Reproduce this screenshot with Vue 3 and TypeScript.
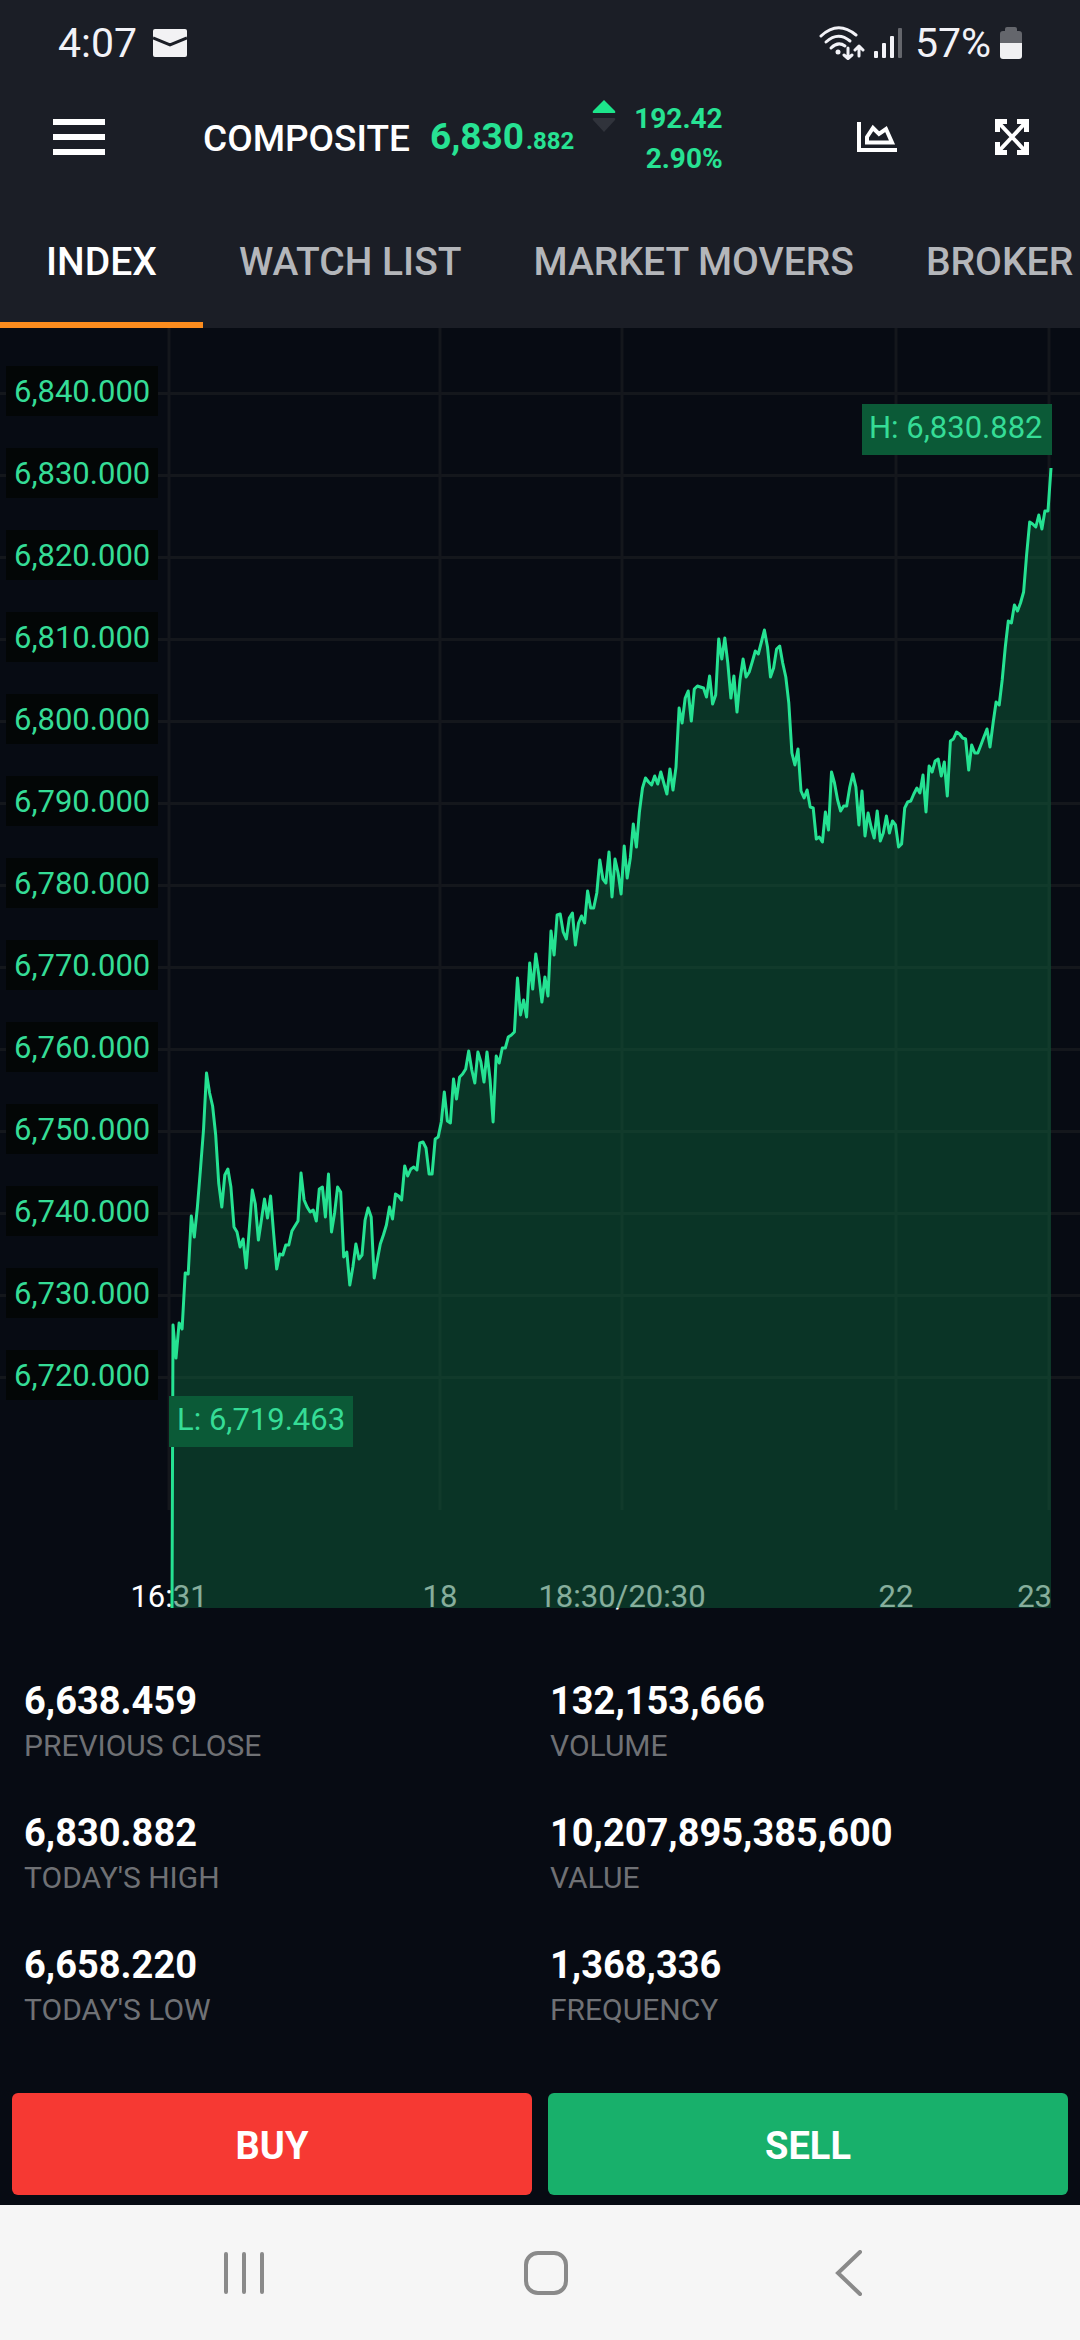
<script setup lang="ts">
import { ref } from 'vue'

interface Stat {
  label: string
  value: string
}

const tabs: string[] = ['INDEX', 'WATCH LIST', 'MARKET MOVERS', 'BROKER']
const activeTab = ref<string>('INDEX')

const stats: Stat[] = [
  { label: 'PREVIOUS CLOSE', value: '6,638.459' },
  { label: 'VOLUME', value: '132,153,666' },
  { label: "TODAY'S HIGH", value: '6,830.882' },
  { label: 'VALUE', value: '10,207,895,385,600' },
  { label: "TODAY'S LOW", value: '6,658.220' },
  { label: 'FREQUENCY', value: '1,368,336' },
]

// Chart space: 1080 wide, the plot runs from y 328 (top) to 1608 (bottom).
const bottom = 1608
const firstX = 173
const lastX = 1051

const samples: number[] = [
  1325, 1358, 1323, 1329, 1273, 1274, 1216, 1237, 1207, 1170, 1130, 1073, 1093, 1106, 1135, 1183,
  1207, 1175, 1169, 1187, 1227, 1232, 1247, 1239, 1268, 1230, 1190, 1204, 1240, 1220, 1199, 1218,
  1196, 1233, 1269, 1254, 1255, 1245, 1245, 1231, 1226, 1221, 1173, 1200, 1207, 1212, 1210, 1221,
  1189, 1187, 1217, 1174, 1232, 1213, 1187, 1192, 1257, 1252, 1285, 1267, 1244, 1259, 1255, 1220,
  1208, 1217, 1278, 1260, 1244, 1235, 1225, 1207, 1219, 1194, 1196, 1200, 1166, 1176, 1169, 1167,
  1170, 1143, 1142, 1148, 1174, 1174, 1139, 1137, 1122, 1092, 1121, 1123, 1079, 1099, 1077, 1074,
  1069, 1051, 1070, 1083, 1052, 1062, 1082, 1052, 1080, 1122, 1056, 1063, 1048, 1048, 1037, 1035,
  1032, 978, 1015, 1000, 1017, 963, 989, 954, 975, 1002, 977, 996, 931, 955, 915, 914,
  932, 939, 918, 913, 945, 923, 916, 923, 891, 908, 908, 893, 860, 879, 883, 852,
  897, 859, 873, 894, 846, 878, 858, 824, 847, 812, 788, 778, 782, 785, 776, 784,
  772, 783, 794, 769, 790, 767, 708, 723, 698, 691, 721, 689, 686, 687, 688, 697,
  676, 704, 695, 639, 659, 638, 663, 698, 676, 712, 680, 659, 677, 672, 662, 651,
  654, 642, 630, 647, 677, 668, 649, 646, 663, 677, 703, 753, 765, 749, 791, 798,
  790, 807, 808, 839, 837, 842, 812, 830, 772, 783, 800, 811, 806, 806, 787, 774,
  787, 825, 791, 836, 813, 827, 838, 811, 841, 833, 816, 833, 821, 825, 847, 844,
  808, 802, 801, 794, 788, 793, 775, 812, 766, 772, 761, 759, 776, 762, 796, 741,
  739, 732, 734, 738, 739, 770, 745, 753, 753, 745, 737, 729, 747, 723, 702, 705,
  680, 647, 621, 623, 605, 611, 603, 592, 555, 522, 524, 527, 515, 529, 511, 511,
  468,
]

const step = (lastX - firstX) / (samples.length - 1)
const linePath =
  `M${firstX - 1} ${bottom}` +
  samples.map((y, i) => `L${(firstX + i * step).toFixed(1)} ${y}`).join('')
const areaPath = `${linePath}L${lastX} ${bottom}Z`

const levels = Array.from({ length: 13 }, (_, i) => ({
  y: 393 + i * 82,
  text: `6,${840 - i * 10}.000`,
}))

const timeLines: number[] = [169, 440, 622, 896, 1049]
const times = [
  { x: 169, text: '16:31', anchor: 'middle' },
  { x: 440, text: '18', anchor: 'middle' },
  { x: 622, text: '18:30/20:30', anchor: 'middle' },
  { x: 896, text: '22', anchor: 'middle' },
  { x: 1052, text: '23', anchor: 'end' },
] as const
</script>

<template>
  <div class="screen">
    <header class="top">
      <div class="status">
        <span class="clock">4:07</span>
        <svg class="mail" width="34" height="28" viewBox="0 0 34 28" aria-hidden="true">
          <rect width="34" height="28" rx="2" fill="#f2f2f4" />
          <path d="M0 9L17 16L34 9" fill="none" stroke="#1b1e26" stroke-width="3" />
        </svg>
        <div class="signals">
          <svg width="46" height="34" viewBox="0 0 46 34" aria-hidden="true">
            <g fill="none" stroke="#f2f2f7" stroke-width="3" stroke-linecap="round" stroke-linejoin="round">
              <path d="M2 10Q19 -6 37 9" />
              <path d="M7 16Q19 5 31 15" />
              <path d="M12 22Q19 15 26 20" />
              <path d="M29 22V32M25 29L29 32.500L33 29" />
              <path d="M40 30V20M36 24L40 20L44 24" />
            </g>
            <circle cx="19" cy="26" r="2.500" fill="#f2f2f7" />
          </svg>
          <svg width="28" height="30" viewBox="0 0 28 30" aria-hidden="true">
            <g fill="#f2f2f7">
              <rect x="0" y="23" width="4" height="7" rx="1" />
              <rect x="8" y="15" width="4" height="15" rx="1" />
              <rect x="16" y="8" width="4" height="22" rx="1" />
              <rect x="24" y="0" width="4" height="30" rx="1" fill="#64666c" />
            </g>
          </svg>
          <span class="battery-text">57%</span>
          <svg width="22" height="32" viewBox="0 0 22 32" aria-hidden="true">
            <path d="M5 4V2Q5 0 7 0H15Q17 0 17 2V4H19Q22 4 22 7V16H0V7Q0 4 3 4Z" fill="#64666c" />
            <path d="M0 16H22V29Q22 32 19 32H3Q0 32 0 29Z" fill="#f0f0f2" />
          </svg>
        </div>
      </div>

      <div class="toolbar">
        <button class="icon-button" type="button" aria-label="Menu">
          <svg width="52" height="36" viewBox="0 0 52 36" fill="#fff">
            <rect width="52" height="6" />
            <rect y="15" width="52" height="6" />
            <rect y="30" width="52" height="6" />
          </svg>
        </button>
        <div class="quote">
          <h1 class="name">COMPOSITE</h1>
          <p class="price">6,830<span class="decimals">.882</span></p>
          <svg class="direction" width="24" height="34" viewBox="0 0 24 34" aria-hidden="true">
            <path d="M12 1L23 12Q24 14 22 14H2Q0 14 1 12Z" fill="#1de58b" />
            <path d="M12 33L23 21Q24 19 22 19H2Q0 19 1 21Z" fill="#30333b" />
          </svg>
          <p class="change"><span>192.42</span><span>2.90%</span></p>
        </div>
        <div class="actions">
          <button class="icon-button" type="button" aria-label="Chart type">
            <svg width="40" height="30" viewBox="0 0 40 30" fill="none" stroke="#fff" stroke-width="4">
              <path d="M2 0V28H40" />
              <path d="M10 20.500V15L16 6L22 12L29 7L35 20.500Z" />
            </svg>
          </button>
          <button class="icon-button" type="button" aria-label="Full screen">
            <svg width="34" height="36" viewBox="0 0 34 36" fill="none" stroke="#fff">
              <path d="M3 3L31 33M31 3L3 33" stroke-width="4" />
              <path d="M12 2.500H2.500V13M22 2.500H31.500V13M12 33.500H2.500V23M22 33.500H31.500V23" stroke-width="5" />
            </svg>
          </button>
        </div>
      </div>

      <nav class="tabs" aria-label="Sections">
        <button
          v-for="tab in tabs"
          :key="tab"
          type="button"
          class="tab"
          :class="{ active: tab === activeTab }"
          @click="activeTab = tab"
        >
          {{ tab }}
        </button>
      </nav>
    </header>

    <main class="content">
      <svg class="chart" viewBox="0 328 1080 1288" role="img" aria-label="Composite index, intraday">
        <g class="grid">
          <path v-for="level in levels" :key="level.y" :d="`M0 ${level.y}.500H1080`" />
          <path v-for="x in timeLines" :key="x" :d="`M${x} 328V1510`" />
        </g>
        <g class="times">
          <text v-for="t in times" :key="t.text" :x="t.x" y="1607" :text-anchor="t.anchor">{{ t.text }}</text>
        </g>
        <path class="area" :d="areaPath" />
        <path class="line" :d="linePath" />
        <g v-for="level in levels" :key="level.text" class="level">
          <rect x="6" :y="level.y - 27" width="152" height="50" />
          <text x="14" :y="level.y + 9">{{ level.text }}</text>
        </g>
        <g class="tag">
          <rect x="862" y="404" width="190" height="51" />
          <text x="869" y="438">H: 6,830.882</text>
          <rect x="169" y="1396" width="184" height="51" />
          <text x="177" y="1430">L: 6,719.463</text>
        </g>
      </svg>

      <dl class="stats">
        <div v-for="stat in stats" :key="stat.label" class="stat">
          <dt>{{ stat.label }}</dt>
          <dd>{{ stat.value }}</dd>
        </div>
      </dl>

      <div class="orders">
        <button class="order buy" type="button">BUY</button>
        <button class="order sell" type="button">SELL</button>
      </div>
    </main>

    <nav class="system" aria-label="System">
      <button class="icon-button" type="button" aria-label="Recent apps">
        <svg width="44" height="46" viewBox="0 0 44 46" fill="none" stroke="#8a8a8a" stroke-width="4" stroke-linecap="round">
          <path d="M4 4V42M22 4V42M40 4V42" />
        </svg>
      </button>
      <button class="icon-button" type="button" aria-label="Home">
        <svg width="46" height="46" viewBox="0 0 46 46" fill="none" stroke="#8a8a8a" stroke-width="4">
          <rect x="3" y="3" width="40" height="40" rx="12" />
        </svg>
      </button>
      <button class="icon-button" type="button" aria-label="Back">
        <svg width="46" height="46" viewBox="0 0 46 46" fill="none" stroke="#8a8a8a" stroke-width="4" stroke-linecap="round">
          <path d="M34 2L12 23L34 44" />
        </svg>
      </button>
    </nav>
  </div>
</template>

<style>
body {
  margin: 0;
  background: #070b13;
}
</style>

<style scoped>
.screen {
  display: flex;
  flex-direction: column;
  min-height: 100vh;
  background: #070b13;
  color: #fff;
  font-family: Roboto, 'Liberation Sans', sans-serif;
  overflow: hidden;
}

button {
  margin: 0;
  padding: 0;
  border: 0;
  background: none;
  color: inherit;
  font: inherit;
  cursor: pointer;
}

svg {
  display: block;
  flex: none;
}

.top {
  background: #1b1e26;
}

.status {
  display: flex;
  align-items: center;
  height: 86px;
  padding: 0 58px;
  color: #f2f2f7;
  font-size: 41px;
  line-height: 48px;
}

.mail {
  margin-left: 16px;
}

.signals {
  display: flex;
  align-items: center;
  gap: 9px;
  margin-left: auto;
}

.battery-text {
  margin-left: 4px;
}

.toolbar {
  display: flex;
  align-items: center;
  height: 102px;
  padding: 0 51px 0 53px;
}

.icon-button {
  display: flex;
}

.quote {
  display: flex;
  align-items: center;
  margin-left: 98px;
  padding-top: 4px;
}

.name,
.price,
.change {
  margin: 0;
}

.name {
  font-size: 37px;
  font-weight: 500;
  line-height: 46px;
}

.price {
  margin-left: 20px;
  color: #27e293;
  font-size: 37px;
  font-weight: 700;
  line-height: 46px;
}

.decimals {
  margin-left: 2px;
  font-size: 24px;
}

.direction {
  align-self: flex-start;
  margin-left: 18px;
}

.change {
  display: flex;
  flex-direction: column;
  align-items: flex-end;
  margin-left: 18px;
  color: #27e293;
  font-size: 28px;
  font-weight: 700;
  line-height: 40px;
}

.actions {
  display: flex;
  align-items: center;
  gap: 98px;
  margin-left: auto;
}

.tabs {
  display: flex;
  height: 140px;
  overflow: hidden;
}

.tab {
  flex: none;
  min-width: 203px;
  box-sizing: border-box;
  padding: 14px 36px 0;
  border-bottom: 6px solid transparent;
  color: #b4b6ba;
  font-size: 39px;
  font-weight: 500;
  white-space: nowrap;
}

.tab.active {
  border-bottom-color: #fb8c1e;
  color: #fff;
}

.content {
  flex: 1;
}

.chart {
  width: 100%;
  height: auto;
  font-size: 31px;
}

.grid {
  stroke: #14171c;
  stroke-width: 3;
}

.times {
  fill: #fff;
}

.area {
  fill: #0d5d39;
  opacity: 0.5;
}

.line {
  fill: none;
  stroke: #25e292;
  stroke-width: 3;
  stroke-linejoin: round;
}

.level rect {
  fill: #030606;
}

.level text,
.tag text {
  fill: #35dc96;
}

.tag rect {
  fill: #0b5a37;
}

.stats {
  display: grid;
  grid-template-columns: 1fr 1fr;
  column-gap: 20px;
  row-gap: 42px;
  margin: 0;
  padding: 60px 24px 63px;
}

.stat {
  display: flex;
  flex-direction: column-reverse;
}

.stat dt {
  color: #6f7175;
  font-size: 30px;
  line-height: 40px;
}

.stat dd {
  margin: 0;
  font-size: 38px;
  font-weight: 700;
  line-height: 50px;
}

.orders {
  display: grid;
  grid-template-columns: 1fr 1fr;
  gap: 16px;
  padding: 0 12px 10px;
}

.order {
  height: 102px;
  padding-top: 4px;
  border-radius: 6px;
  font-size: 38px;
  font-weight: 700;
}

.buy {
  background: #f63933;
}

.sell {
  background: #18b06b;
}

.system {
  display: flex;
  align-items: center;
  justify-content: space-between;
  height: 135px;
  padding: 0 208px 0 222px;
  background: #f6f6f6;
}
</style>
